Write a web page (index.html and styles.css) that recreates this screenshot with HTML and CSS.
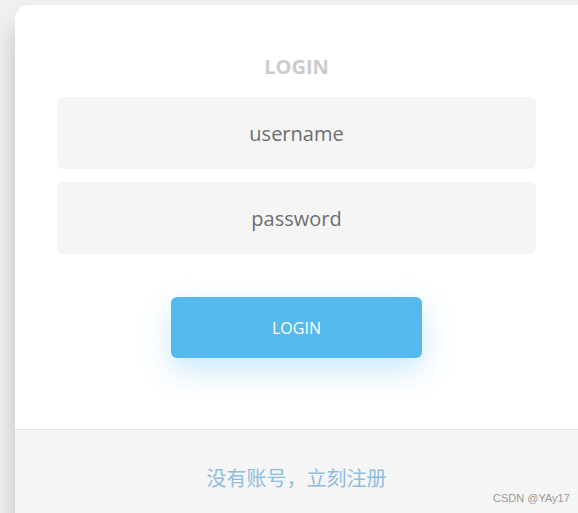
FILE: index.html
```html
<!DOCTYPE html>
<html>
<head>
<meta charset="utf-8">
<link rel="stylesheet" href="styles.css">
</head>
<body>
<div class="page">
  <div class="card">
    <div class="form">
      <h1 class="title">LOGIN</h1>
      <div class="field">username</div>
      <div class="field">password</div>
      <button class="btn">LOGIN</button>
    </div>
    <div class="footer">没有账号，立刻注册</div>
  </div>
  <div class="watermark">CSDN @YAy17</div>
</div>
</body>
</html>
```
FILE: styles.css
```css
html, body {
  margin: 0;
  padding: 0;
  height: 100%;
  overflow: hidden;
  background: #f0f0f0;
  font-family: "Open Sans", "Noto Sans CJK SC", sans-serif;
}
.page {
  position: relative;
  height: 513px;
  padding: 5px 0 0 15px;
  box-sizing: border-box;
  overflow: hidden;
}
.card {
  width: 580px;
  height: 540px;
  background: #fff;
  border-radius: 14px;
  box-shadow: 0 20px 26px rgba(0, 0, 0, 0.2);
  overflow: hidden;
  display: flex;
  flex-direction: column;
}
.form {
  width: 479px;
  margin-left: 42px;
  padding-top: 47px;
  display: flex;
  flex-direction: column;
  align-items: center;
  height: 424px;
  flex-shrink: 0;
  box-sizing: border-box;
}
.title {
  margin: 0 0 15px;
  font-size: 20px;
  line-height: 30px;
  font-weight: 700;
  color: #cccccc;
}
.field {
  width: 100%;
  height: 72px;
  background: #f5f5f5;
  border-radius: 6px;
  display: flex;
  align-items: center;
  justify-content: center;
  font-size: 20px;
  color: #6e6e6e;
  margin-bottom: 13px;
}
.btn {
  margin-top: 30px;
  width: 251px;
  height: 61px;
  border: none;
  border-radius: 6px;
  background: #56b9ed;
  color: #fff;
  font-family: "Open Sans", sans-serif;
  font-size: 16px;
  font-weight: 500;
  box-shadow: 0 12px 30px rgba(86, 185, 237, 0.32);
}
.footer {
  border-top: 1px solid #dfe5ec;
  background: #f5f5f5;
  flex: 1;
  padding-top: 34px;
  width: 563px;
  text-align: center;
  font-family: "Noto Sans CJK SC", sans-serif;
  font-size: 20px;
  line-height: 28px;
  color: #8fbde0;
}
.watermark {
  position: absolute;
  left: 493px;
  top: 492px;
  font-family: "Liberation Sans", Arial, sans-serif;
  font-size: 11px;
  color: #999;
}
```
